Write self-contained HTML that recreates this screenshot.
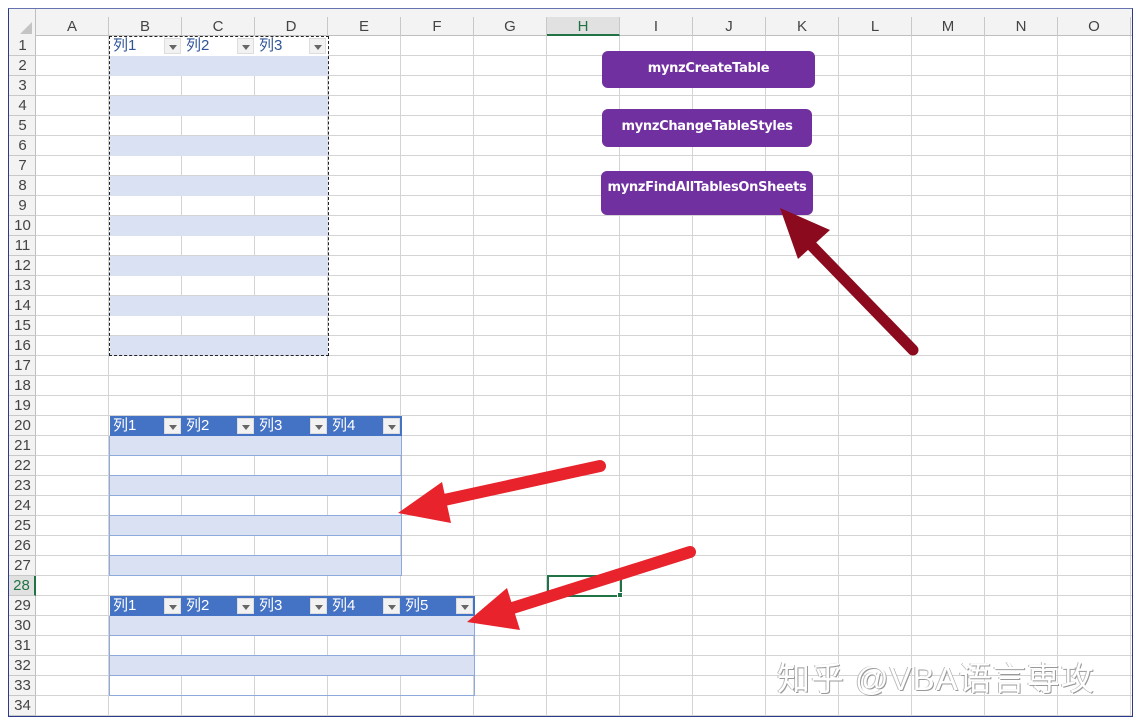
<!DOCTYPE html>
<html><head><meta charset="utf-8"><style>
*{margin:0;padding:0;box-sizing:border-box}
body{width:1140px;height:718px;background:#fff;position:relative;overflow:hidden;font-family:"Liberation Sans","Noto Sans CJK SC",sans-serif}
.a{position:absolute}
#grid{left:36px;top:36px;width:1096px;height:680px;
background-image:linear-gradient(to right,#d4d4d4 1px,transparent 1px),linear-gradient(to bottom,#d4d4d4 1px,transparent 1px);
background-size:73px 20px;background-position:-1px -1px}
.ch{top:17px;height:19px;width:73px;text-align:center;font-size:15px;color:#444;line-height:19px;border-right:1px solid #c8c8c8}
.rh{left:9px;width:27px;height:20px;font-size:15px;color:#444;line-height:20px;text-align:center;border-bottom:1px solid #c8c8c8}
.band{background:#d9e1f2}
.hd{background:#4472c4;color:#fff;font-size:15px;line-height:20px;padding-left:3px;height:20px;width:73px}
.hw{background:#fff;color:#2f5597;font-size:15px;line-height:20px;padding-left:3px;height:20px;width:73px}
.dd{position:absolute;right:2px;top:2px;width:17px;height:16px;background:#f2f2f2;border:1px solid #ddd}
.dd:after{content:"";position:absolute;left:4px;top:6px;border-left:4px solid transparent;border-right:4px solid transparent;border-top:5px solid #666}
.btn{background:#7030a0;border-radius:6px;color:#fff;font-weight:bold;font-size:13px;text-align:center;font-family:"DejaVu Sans",sans-serif;letter-spacing:-0.3px}
</style></head><body>
<div class="a" style="left:8px;top:8px;width:1125px;height:709px;border:1px solid #2b3a8a;border-top-color:#6673b0"></div>
<div class="a" style="left:9px;top:9px;width:1123px;height:27px;background:#f3f3f3;border-bottom:1px solid #bfbfbf"></div>
<div class="a" style="left:9px;top:9px;width:27px;height:707px;background:#f3f3f3;border-right:1px solid #bfbfbf"></div>
<div class="a" style="left:20px;top:22px;width:0;height:0;border-left:12px solid transparent;border-bottom:12px solid #c4c4c4"></div>
<div id="grid" class="a"></div>

<div class="a ch" style="left:36px">A</div><div class="a ch" style="left:109px">B</div><div class="a ch" style="left:182px">C</div><div class="a ch" style="left:255px">D</div><div class="a ch" style="left:328px">E</div><div class="a ch" style="left:401px">F</div><div class="a ch" style="left:474px">G</div><div class="a ch" style="left:547px;background:#e1e1e1;color:#217346;border-bottom:2px solid #217346">H</div><div class="a ch" style="left:620px">I</div><div class="a ch" style="left:693px">J</div><div class="a ch" style="left:766px">K</div><div class="a ch" style="left:839px">L</div><div class="a ch" style="left:912px">M</div><div class="a ch" style="left:985px">N</div><div class="a ch" style="left:1058px">O</div>

<div id="rows"></div>
<script>
var h='';for(var i=1;i<=34;i++){var t=36+(i-1)*20;var s=i==28?'background:#e1e1e1;color:#217346;border-right:2px solid #217346;':'';h+='<div class="a rh" style="top:'+t+'px;'+s+'">'+i+'</div>';}
document.getElementById('rows').innerHTML=h;
</script>

<!-- table 1 -->
<div class="a band" style="left:110px;top:56px;width:218px;height:20px"></div>
<div class="a band" style="left:110px;top:96px;width:218px;height:20px"></div>
<div class="a band" style="left:110px;top:136px;width:218px;height:20px"></div>
<div class="a band" style="left:110px;top:176px;width:218px;height:20px"></div>
<div class="a band" style="left:110px;top:216px;width:218px;height:20px"></div>
<div class="a band" style="left:110px;top:256px;width:218px;height:20px"></div>
<div class="a band" style="left:110px;top:296px;width:218px;height:20px"></div>
<div class="a band" style="left:110px;top:336px;width:218px;height:20px"></div>
<div class="a hw" style="left:110px;top:36px">列1<span class="dd"></span></div>
<div class="a hw" style="left:183px;top:36px">列2<span class="dd"></span></div>
<div class="a hw" style="left:256px;top:36px;width:72px">列3<span class="dd"></span></div>
<div class="a" style="left:109px;top:36px;width:220px;height:320px;border:1px dashed #222"></div>

<!-- table 2 -->
<div class="a band" style="left:110px;top:436px;width:292px;height:20px"></div>
<div class="a band" style="left:110px;top:476px;width:292px;height:20px"></div>
<div class="a band" style="left:110px;top:516px;width:292px;height:20px"></div>
<div class="a band" style="left:110px;top:556px;width:292px;height:20px"></div>
<div class="a" style="left:110px;top:455px;width:292px;height:1px;background:#8ea9db"></div>
<div class="a" style="left:110px;top:475px;width:292px;height:1px;background:#8ea9db"></div>
<div class="a" style="left:110px;top:495px;width:292px;height:1px;background:#8ea9db"></div>
<div class="a" style="left:110px;top:515px;width:292px;height:1px;background:#8ea9db"></div>
<div class="a" style="left:110px;top:535px;width:292px;height:1px;background:#8ea9db"></div>
<div class="a" style="left:110px;top:555px;width:292px;height:1px;background:#8ea9db"></div>
<div class="a" style="left:109px;top:436px;width:293px;height:140px;border:1px solid #8ea9db;border-top:none"></div>
<div class="a hd" style="left:110px;top:416px">列1<span class="dd"></span></div>
<div class="a hd" style="left:183px;top:416px">列2<span class="dd"></span></div>
<div class="a hd" style="left:256px;top:416px">列3<span class="dd"></span></div>
<div class="a hd" style="left:329px;top:416px">列4<span class="dd"></span></div>

<!-- table 3 -->
<div class="a band" style="left:110px;top:616px;width:365px;height:20px"></div>
<div class="a band" style="left:110px;top:656px;width:365px;height:20px"></div>
<div class="a" style="left:110px;top:635px;width:365px;height:1px;background:#8ea9db"></div>
<div class="a" style="left:110px;top:655px;width:365px;height:1px;background:#8ea9db"></div>
<div class="a" style="left:110px;top:675px;width:365px;height:1px;background:#8ea9db"></div>
<div class="a" style="left:109px;top:616px;width:366px;height:80px;border:1px solid #8ea9db;border-top:none"></div>
<div class="a hd" style="left:110px;top:596px">列1<span class="dd"></span></div>
<div class="a hd" style="left:183px;top:596px">列2<span class="dd"></span></div>
<div class="a hd" style="left:256px;top:596px">列3<span class="dd"></span></div>
<div class="a hd" style="left:329px;top:596px">列4<span class="dd"></span></div>
<div class="a hd" style="left:402px;top:596px">列5<span class="dd"></span></div>

<!-- selection -->
<div class="a" style="left:547px;top:575px;width:75px;height:22px;border:2px solid #217346"></div>
<div class="a" style="left:617px;top:592px;width:6px;height:6px;background:#217346;border:1px solid #fff"></div>

<!-- buttons -->
<div class="a btn" style="left:602px;top:51px;width:213px;height:37px;line-height:35px">mynzCreateTable</div>
<div class="a btn" style="left:602px;top:109px;width:210px;height:38px;line-height:36px">mynzChangeTableStyles</div>
<div class="a btn" style="left:601px;top:171px;width:212px;height:44px;line-height:34px">mynzFindAllTablesOnSheets</div>

<div class="a" style="left:777px;top:652px;font-size:33px;letter-spacing:1px;color:#fff;text-shadow:1px 1px 0 #999,-1px 0 0 #bbb;font-family:'Liberation Sans','Noto Sans CJK SC',sans-serif;white-space:nowrap">知乎 @VBA语言専攻</div>

<svg class="a" style="left:0;top:0" width="1140" height="718">
<line x1="913" y1="350" x2="808" y2="242" stroke="#8b0a1e" stroke-width="11" stroke-linecap="round"/>
<polygon points="780,208 798,259 830,230" fill="#8b0a1e"/>
<line x1="600" y1="466" x2="435" y2="502" stroke="#e8232b" stroke-width="12" stroke-linecap="round"/>
<polygon points="398,513 442,482 451,523" fill="#e8232b"/>
<line x1="690" y1="552" x2="500" y2="612" stroke="#e8232b" stroke-width="12" stroke-linecap="round"/>
<polygon points="467,622 507,588 520,630" fill="#e8232b"/>
</svg>
</body></html>
